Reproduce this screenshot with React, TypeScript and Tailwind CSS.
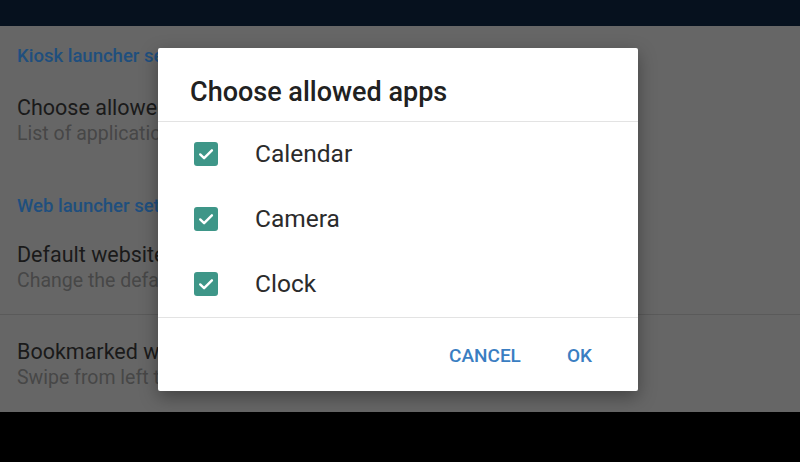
import React from "react";

const apps = ["Calendar", "Camera", "Clock"];

function CheckedBox() {
  return (
    <span className="flex h-[24px] w-[24px] shrink-0 items-center justify-center rounded-[3px] bg-[#3e9688]">
      <svg aria-hidden="true" className="h-[24px] w-[24px]" fill="none" viewBox="0 0 24 24">
        <path d="M6.2 12.4l3.9 3.8 7.8-7.9" stroke="#ffffff" strokeLinecap="round" strokeLinejoin="round" strokeWidth={2.4} />
      </svg>
    </span>
  );
}

function PrefItem({ title, summary, className = "" }: { title: string; summary: string; className?: string }) {
  return (
    <div className={className}>
      <p className="whitespace-nowrap text-[21.5px] leading-[28px] text-[#1a1a1a]">{title}</p>
      <p className="whitespace-nowrap text-[19.5px] leading-[24px] text-[#474747]">{summary}</p>
    </div>
  );
}

export default function App() {
  return (
    <div className="flex h-[462px] w-[800px] flex-col overflow-hidden bg-black font-['Roboto','Noto_Sans',sans-serif]">
      <div className="h-[26px] shrink-0 bg-[#06111e]" />

      <div className="relative h-[386px] shrink-0 overflow-hidden bg-[#666666]">
        {/* settings list behind the scrim */}
        <div className="pt-[18px]">
          <div className="px-[17px]">
            <p className="text-[18.5px] font-medium leading-[24px] text-[#1f4f7e]">Kiosk launcher settings</p>
            <PrefItem className="mt-[26px]" summary="List of applications to show" title="Choose allowed apps" />
            <p className="mt-[48px] text-[18.5px] font-medium leading-[24px] text-[#1f4f7e]">Web launcher settings</p>
            <PrefItem className="mt-[23px]" summary="Change the default page" title="Default website" />
          </div>
          <div className="mt-[21px] h-px bg-[#5a5a5a]" />
          <PrefItem className="mt-[23px] px-[17px]" summary="Swipe from left to see" title="Bookmarked websites" />
        </div>

        {/* dialog */}
        <div className="absolute inset-0 flex items-center justify-center pr-[4px]">
          <div className="w-[480px] rounded-[2px] bg-white shadow-[0_6px_18px_rgba(0,0,0,0.35)]">
            <h2 className="px-[32px] pb-[13px] pt-[28px] text-[27px] font-medium leading-[32px] text-[#212121]">
              Choose allowed apps
            </h2>
            <div className="h-px bg-[#e3e3e3]" />
            <ul>
              {apps.map((app) => (
                <li className="flex h-[65px] items-center gap-[37px] pl-[36px]" key={app}>
                  <CheckedBox />
                  <span className="text-[24.5px] leading-[30px] text-[#2b2b2b]">{app}</span>
                </li>
              ))}
            </ul>
            <div className="h-px bg-[#e3e3e3]" />
            <div className="flex h-[73px] items-center justify-end gap-[18px] pr-[32px] pt-[4px]">
              <button className="px-[14px] text-[19px] font-medium leading-[24px] text-[#3a7ec2]" type="button">
                CANCEL
              </button>
              <button className="px-[14px] text-[19px] font-medium leading-[24px] text-[#3a7ec2]" type="button">
                OK
              </button>
            </div>
          </div>
        </div>
      </div>

      <div className="flex-1 bg-black" />
    </div>
  );
}
